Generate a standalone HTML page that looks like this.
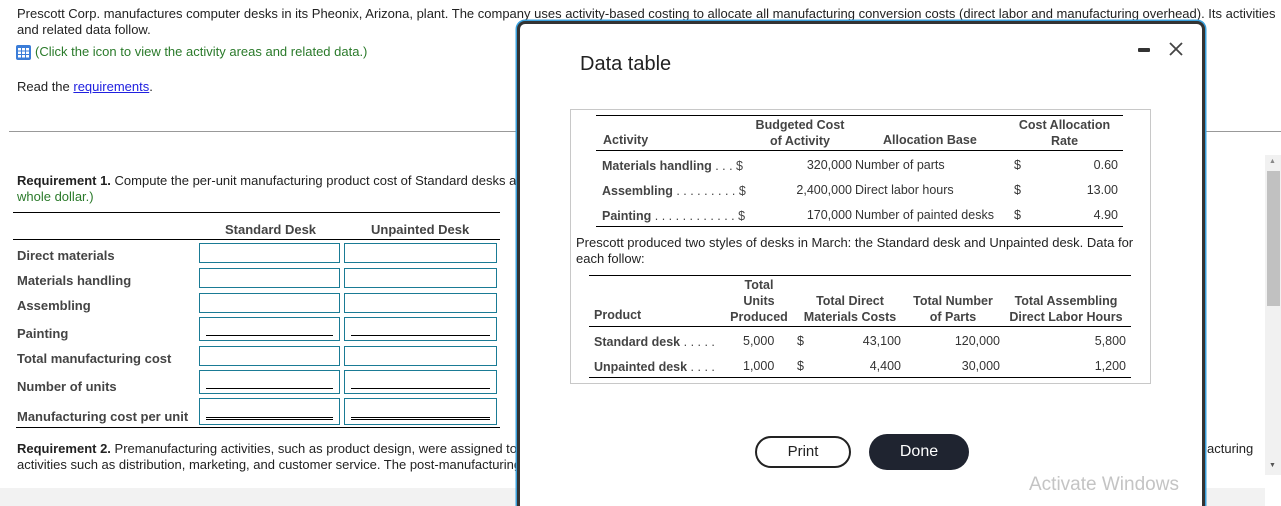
<!DOCTYPE html>
<html style="width:1281px;height:506px;overflow:hidden"><head><meta charset="utf-8"><style>
*{margin:0;padding:0;box-sizing:border-box}
body{width:1281px;height:506px;overflow:hidden;background:#fff;font-family:"Liberation Sans",Arial,sans-serif;color:#222;font-size:13px;position:relative}
.a{position:absolute;white-space:nowrap}
.lbl{position:absolute;left:17px;font-weight:bold;color:#444;font-size:13px}
.box{position:absolute;border:1.5px solid #1a7b95;background:#fff}
.ul{position:absolute;left:6px;right:6px;border-top:1px solid #000}
.dbl{position:absolute;left:6px;right:6px;height:3px;border-top:1px solid #000;border-bottom:1px solid #000}
.hr{position:absolute;border-top:1.5px solid #000}
.m{color:#333;font-size:12.5px}
.b{font-weight:bold;color:#444}
</style></head><body>
<div class="a" style="left:17px;top:6px">Prescott Corp. manufactures computer desks in its Pheonix, Arizona, plant. The company uses activity-based costing to allocate all manufacturing conversion costs (direct labor and manufacturing overhead). Its activities</div>
<div class="a" style="left:17px;top:22px">and related data follow.</div>
<svg class="a" style="left:16px;top:45px" width="15" height="15" viewBox="0 0 15 15"><rect x="0" y="0" width="15" height="15" rx="2" fill="#3b7dd8"/><g fill="#fff"><rect x="2" y="3" width="3" height="2.5"/><rect x="6" y="3" width="3" height="2.5"/><rect x="10" y="3" width="3" height="2.5"/><rect x="2" y="6.5" width="3" height="2.5"/><rect x="6" y="6.5" width="3" height="2.5"/><rect x="10" y="6.5" width="3" height="2.5"/><rect x="2" y="10" width="3" height="2.5"/><rect x="6" y="10" width="3" height="2.5"/><rect x="10" y="10" width="3" height="2.5"/></g></svg>
<div class="a" style="left:35px;top:44px;color:#2a7a2a">(Click the icon to view the activity areas and related data.)</div>
<div class="a" style="left:17px;top:79px">Read the <span style="color:#2020e0;text-decoration:underline">requirements</span>.</div>
<div class="a" style="left:9px;top:131px;width:1272px;border-top:1px solid #999"></div>
<div class="a" style="left:17px;top:173px"><b>Requirement 1.</b> Compute the per-unit manufacturing product cost of Standard desks a</div>
<div class="a" style="left:17px;top:189px;color:#2a7a2a">whole dollar.)</div>

<div class="hr" style="left:13px;top:212px;width:487px"></div>
<div class="a b" style="left:225px;top:222px">Standard Desk</div>
<div class="a b" style="left:371px;top:222px">Unpainted Desk</div>
<div class="hr" style="left:13px;top:239px;width:487px"></div>

<div class="lbl" style="top:248px">Direct materials</div>
<div class="box" style="left:199px;top:243px;width:141px;height:20px"></div><div class="box" style="left:344px;top:243px;width:153px;height:20px"></div>
<div class="lbl" style="top:273px">Materials handling</div>
<div class="box" style="left:199px;top:268px;width:141px;height:20px"></div><div class="box" style="left:344px;top:268px;width:153px;height:20px"></div>
<div class="lbl" style="top:298px">Assembling</div>
<div class="box" style="left:199px;top:293px;width:141px;height:20px"></div><div class="box" style="left:344px;top:293px;width:153px;height:20px"></div>
<div class="lbl" style="top:326px">Painting</div>
<div class="box" style="left:199px;top:317px;width:141px;height:24px"><div class="ul" style="top:17px"></div></div><div class="box" style="left:344px;top:317px;width:153px;height:24px"><div class="ul" style="top:17px"></div></div>
<div class="lbl" style="top:351px">Total manufacturing cost</div>
<div class="box" style="left:199px;top:346px;width:141px;height:20px"></div><div class="box" style="left:344px;top:346px;width:153px;height:20px"></div>
<div class="lbl" style="top:379px">Number of units</div>
<div class="box" style="left:199px;top:370px;width:141px;height:24px"><div class="ul" style="top:17px"></div></div><div class="box" style="left:344px;top:370px;width:153px;height:24px"><div class="ul" style="top:17px"></div></div>
<div class="lbl" style="top:409px">Manufacturing cost per unit</div>
<div class="box" style="left:199px;top:398px;width:141px;height:27px"><div class="dbl" style="top:18px"></div></div><div class="box" style="left:344px;top:398px;width:153px;height:27px"><div class="dbl" style="top:18px"></div></div>
<div class="hr" style="left:16px;top:427px;width:484px;border-top-width:1px"></div>

<div class="a" style="left:17px;top:441px"><b>Requirement 2.</b> Premanufacturing activities, such as product design, were assigned to</div>
<div class="a" style="left:17px;top:457px">activities such as distribution, marketing, and customer service. The post-manufacturing</div>
<div class="a" style="left:1207px;top:441px">acturing</div>
<div class="a" style="left:0;top:488px;width:1265px;height:18px;background:#f2f2f2"></div>
<div class="a" style="left:1265px;top:155px;width:16px;height:320px;background:#f1f1f1"></div>
<div class="a" style="left:1267px;top:171px;width:13px;height:135px;background:#c1c1c1"></div>
<div class="a" style="left:1269px;top:158px;font-size:7px;color:#888">▲</div>
<div class="a" style="left:1269px;top:462px;font-size:7px;color:#555">▼</div>

<!-- modal -->
<div class="a" style="left:517px;top:21px;width:688px;height:500px;border:3px solid #333;border-radius:8px 8px 0 0;background:#fff;box-shadow:0 0 0 1.5px #3aa0dc"></div>
<div class="a" style="left:580px;top:53px;font-size:20px;color:#222">Data table</div>
<div class="a" style="left:1138px;top:48px;width:12px;height:4px;background:#333;border-radius:1px"></div>
<svg class="a" style="left:1168px;top:41px" width="16" height="16" viewBox="0 0 16 16"><path d="M2 2L14 14M14 2L2 14" stroke="#444" stroke-width="1.8"/></svg>

<div class="a" style="left:570px;top:109px;width:581px;height:275px;border:1px solid #c8c8c8"></div>
<div class="hr" style="left:596px;top:115px;width:527px;border-top-width:1px"></div>
<div class="a m b" style="left:750px;top:117px;width:100px;text-align:center;white-space:normal;line-height:16px">Budgeted Cost of Activity</div>
<div class="a m b" style="left:603px;top:133px">Activity</div>
<div class="a m b" style="left:883px;top:133px">Allocation Base</div>
<div class="a m b" style="left:1010px;top:117px;width:109px;text-align:center;white-space:normal;line-height:16px">Cost Allocation Rate</div>
<div class="hr" style="left:596px;top:150px;width:527px"></div>
<div class="a m b" style="left:602px;top:159px">Materials handling <span style="font-weight:normal">. . . $</span></div>
<div class="a m b" style="left:602px;top:184px">Assembling <span style="font-weight:normal">. . . . . . . . . $</span></div>
<div class="a m b" style="left:602px;top:209px">Painting <span style="font-weight:normal">. . . . . . . . . . . . $</span></div>
<div class="a m" style="left:760px;top:158px;width:92px;text-align:right">320,000</div>
<div class="a m" style="left:760px;top:183px;width:92px;text-align:right">2,400,000</div>
<div class="a m" style="left:760px;top:208px;width:92px;text-align:right">170,000</div>
<div class="a m" style="left:855px;top:158px">Number of parts</div>
<div class="a m" style="left:855px;top:183px">Direct labor hours</div>
<div class="a m" style="left:855px;top:208px">Number of painted desks</div>
<div class="a m" style="left:1014px;top:158px">$</div><div class="a m" style="left:1014px;top:183px">$</div><div class="a m" style="left:1014px;top:208px">$</div>
<div class="a m" style="left:1060px;top:158px;width:58px;text-align:right">0.60</div>
<div class="a m" style="left:1060px;top:183px;width:58px;text-align:right">13.00</div>
<div class="a m" style="left:1060px;top:208px;width:58px;text-align:right">4.90</div>
<div class="hr" style="left:596px;top:226px;width:527px;border-top-width:1px"></div>
<div class="a" style="left:576px;top:235px;color:#222;font-size:13px">Prescott produced two styles of desks in March: the Standard desk and Unpainted desk. Data for</div>
<div class="a" style="left:576px;top:251px;color:#222;font-size:13px">each follow:</div>
<div class="hr" style="left:589px;top:275px;width:542px;border-top-width:1px"></div>
<div class="a m b" style="left:729px;top:277px;width:60px;text-align:center;line-height:16px">Total<br>Units<br>Produced</div>
<div class="a m b" style="left:798px;top:293px;width:104px;text-align:center;line-height:16px">Total Direct<br>Materials Costs</div>
<div class="a m b" style="left:906px;top:293px;width:94px;text-align:center;line-height:16px">Total Number<br>of Parts</div>
<div class="a m b" style="left:1003px;top:293px;width:126px;text-align:center;line-height:16px">Total Assembling<br>Direct Labor Hours</div>
<div class="a m b" style="left:594px;top:308px">Product</div>
<div class="hr" style="left:589px;top:326px;width:542px"></div>
<div class="a m b" style="left:594px;top:335px">Standard desk <span style="font-weight:normal">. . . . .</span></div>
<div class="a m b" style="left:594px;top:360px">Unpainted desk <span style="font-weight:normal">. . . .</span></div>
<div class="a m" style="left:743px;top:334px">5,000</div><div class="a m" style="left:743px;top:359px">1,000</div>
<div class="a m" style="left:797px;top:334px">$</div><div class="a m" style="left:797px;top:359px">$</div>
<div class="a m" style="left:840px;top:334px;width:61px;text-align:right">43,100</div>
<div class="a m" style="left:840px;top:359px;width:61px;text-align:right">4,400</div>
<div class="a m" style="left:930px;top:334px;width:70px;text-align:right">120,000</div>
<div class="a m" style="left:930px;top:359px;width:70px;text-align:right">30,000</div>
<div class="a m" style="left:1060px;top:334px;width:66px;text-align:right">5,800</div>
<div class="a m" style="left:1060px;top:359px;width:66px;text-align:right">1,200</div>
<div class="hr" style="left:589px;top:377px;width:542px;border-top-width:1px"></div>

<div class="a" style="left:755px;top:436px;width:96px;height:32px;border:2px solid #222;border-radius:16px;text-align:center;line-height:28px;font-size:15px;color:#222">Print</div>
<div class="a" style="left:869px;top:434px;width:100px;height:36px;background:#1f2430;border-radius:18px;text-align:center;line-height:36px;font-size:16px;color:#fff">Done</div>
<div class="a" style="left:1029px;top:474px;font-size:19px;color:#c4c4c4">Activate Windows</div>
</body></html>
